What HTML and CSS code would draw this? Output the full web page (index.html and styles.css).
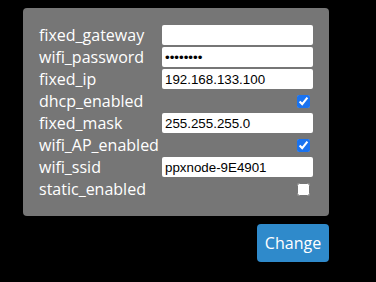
FILE: index.html
```html
<!DOCTYPE html>
<html lang="en">
<head>
    <meta charset="UTF-8" />
    <title>Settings</title>
    <link rel="stylesheet" href="styles.css">
</head>
<body>

<div class="page">
    <form class="panel">
        <label class="name" for="fixed_gateway">fixed_gateway</label>
        <input type="text" id="fixed_gateway" value="">

        <label class="name" for="wifi_password">wifi_password</label>
        <input type="password" id="wifi_password" value="12345678">

        <label class="name" for="fixed_ip">fixed_ip</label>
        <input type="text" id="fixed_ip" value="192.168.133.100">

        <label class="name" for="dhcp_enabled">dhcp_enabled</label>
        <div class="check"><input type="checkbox" id="dhcp_enabled" checked></div>

        <label class="name" for="fixed_mask">fixed_mask</label>
        <input type="text" id="fixed_mask" value="255.255.255.0">

        <label class="name" for="wifi_AP_enabled">wifi_AP_enabled</label>
        <div class="check"><input type="checkbox" id="wifi_AP_enabled" checked></div>

        <label class="name" for="wifi_ssid">wifi_ssid</label>
        <input type="text" id="wifi_ssid" value="ppxnode-9E4901">

        <label class="name" for="static_enabled">static_enabled</label>
        <div class="check"><input type="checkbox" id="static_enabled"></div>
    </form>

    <div class="actions">
        <button class="change-btn">Change</button>
    </div>
</div>

</body>
</html>
```

FILE: styles.css
```css
* {
    box-sizing: border-box;
    margin: 0;
    padding: 0;
}

html, body {
    background: #000;
    font-family: 'Open Sans', Arial, sans-serif;
    color: #fff;
}

.page {
    width: 306px;
    margin: 8px 0 0 23px;
}

/* =========================
   SETTINGS PANEL
========================= */
.panel {
    background: #767676;
    border-radius: 4px;
    padding: 17px 16px 17px 16px;
    display: grid;
    grid-template-columns: 123px 151px;
    grid-auto-rows: 20px;
    row-gap: 2px;
    align-items: center;
}

.name {
    font-size: 16px;
    line-height: 20px;
    color: #fff;
}

.panel input[type="text"],
.panel input[type="password"] {
    width: 151px;
    height: 20px;
    border: none;
    border-radius: 2px;
    background: #fff;
    color: #000;
    padding: 0 3px;
    font-family: 'Liberation Sans', Arial, sans-serif;
    font-size: 13.33px;
}

.check {
    display: flex;
    justify-content: flex-end;
    padding-right: 3px;
}

.check input {
    width: 13px;
    height: 13px;
    accent-color: #1a73f0;
}

/* =========================
   ACTIONS
========================= */
.actions {
    display: flex;
    justify-content: flex-end;
    margin-top: 8px;
}

.change-btn {
    width: 72px;
    height: 38px;
    background: #2f8acb;
    color: #fff;
    border: none;
    border-radius: 4px;
    font-family: 'Open Sans', Arial, sans-serif;
    font-size: 16px;
}
```
